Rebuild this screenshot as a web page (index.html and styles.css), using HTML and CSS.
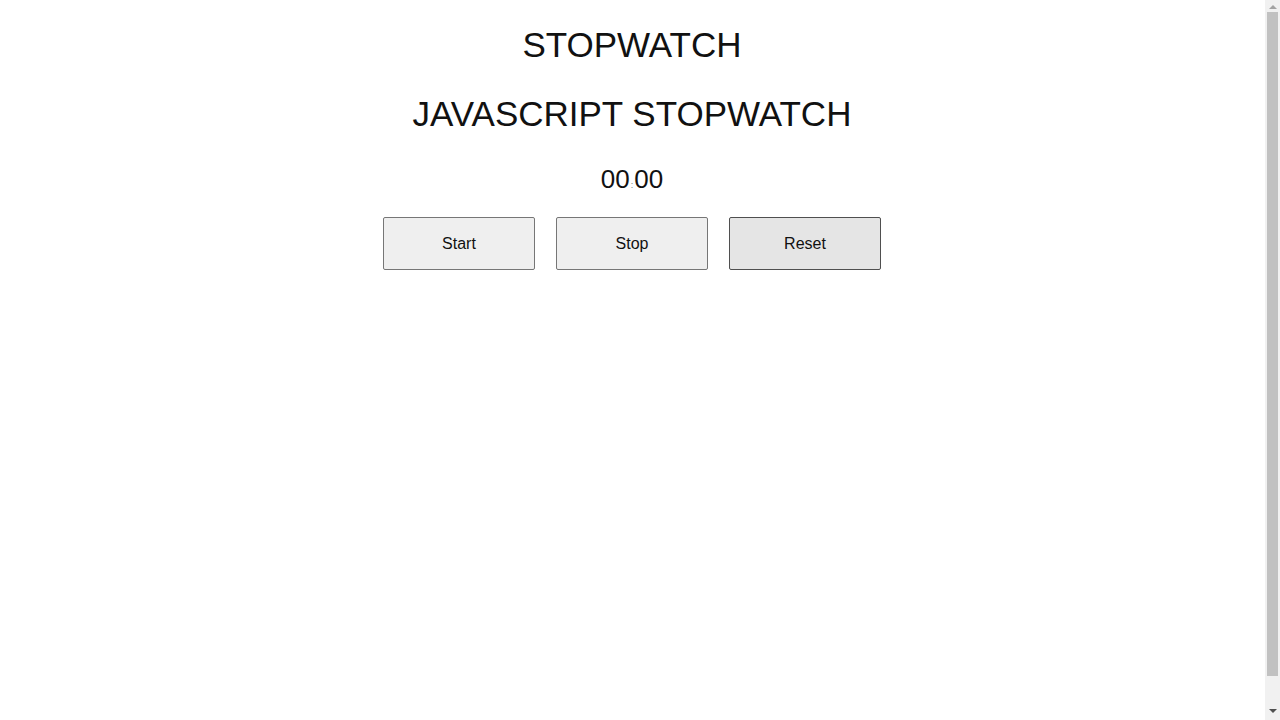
FILE: index.html
```html
<!DOCTYPE html>
<html lang="en">
<head>
<meta charset="utf-8">
<title>Stopwatch</title>
<link rel="stylesheet" href="styles.css">
</head>
<body>
<div class="layout">
  <div class="page">
    <h1 class="title">STOPWATCH</h1>
    <h2 class="subtitle">JAVASCRIPT STOPWATCH</h2>
    <p class="timer"><span class="digits">00</span><span class="colon">:</span><span class="digits">00</span></p>
    <div class="buttons">
      <button class="btn">Start</button>
      <button class="btn">Stop</button>
      <button class="btn btn-hover">Reset</button>
    </div>
  </div>
  <div class="scrollbar">
    <div class="arrow arrow-up"></div>
    <div class="thumb"></div>
    <div class="arrow arrow-down"></div>
  </div>
</div>
</body>
</html>
```

FILE: styles.css
```css
html, body {
  margin: 0;
  padding: 0;
  background: #ffffff;
  overflow: hidden;
}
body {
  font-family: "Liberation Sans", Arial, sans-serif;
  color: #000000;
}
.layout {
  display: flex;
  height: 720px;
}
.page {
  flex: 1;
  display: flex;
  flex-direction: column;
  align-items: center;
  padding-top: 25px;
}
.title, .subtitle {
  font-size: 35px;
  font-weight: normal;
  line-height: 40px;
  margin: 0;
  color: #111111;
}
.subtitle {
  margin-top: 29px;
}
.timer {
  margin: 30px 0 0 0;
  font-size: 26px;
  line-height: 30px;
  color: #111111;
}
.colon {
  font-size: 9px;
  line-height: 0;
  color: #777777;
  padding: 0 1px;
}
.buttons {
  display: flex;
  gap: 21px;
  margin-top: 23px;
}
.btn {
  width: 152px;
  height: 53px;
  background: #efefef;
  border: 1px solid #767676;
  border-radius: 2px;
  font-family: "Liberation Sans", Arial, sans-serif;
  font-size: 16px;
  color: #111111;
  padding: 0;
}
.btn-hover {
  background: #e5e5e5;
  border-color: #4f4f4f;
}
.scrollbar {
  flex: 0 0 15px;
  height: 720px;
  margin-left: 1px;
  background: #f1f1f1;
  display: flex;
  flex-direction: column;
  align-items: center;
}
.arrow {
  width: 0;
  height: 0;
  border-left: 4px solid transparent;
  border-right: 4px solid transparent;
}
.arrow-up {
  border-bottom: 4px solid #a3a3a3;
  margin-top: 5px;
}
.arrow-down {
  border-top: 4px solid #505050;
  margin-top: 33px;
}
.thumb {
  width: 11px;
  height: 664px;
  background: #c1c1c1;
  margin-top: 3px;
}
```
